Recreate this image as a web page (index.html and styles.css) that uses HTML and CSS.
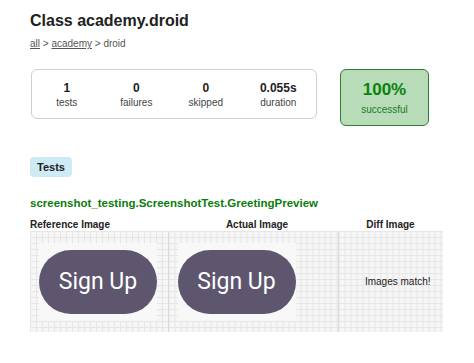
FILE: index.html
```html
<!DOCTYPE html>
<html lang="en">
<head>
  <meta charset="UTF-8" />
  <title>Test results - Class academy.droid</title>
  <link rel="stylesheet" href="styles.css">
</head>
<body>
  <div id="content">
    <h1>Class academy.droid</h1>
    <div class="breadcrumbs">
      <a href="#">all</a> &gt; <a href="#">academy</a> &gt; droid
    </div>

    <div id="summary">
      <div class="infoBox">
        <div class="counter">
          <div class="value">1</div>
          <p>tests</p>
        </div>
        <div class="counter">
          <div class="value">0</div>
          <p>failures</p>
        </div>
        <div class="counter">
          <div class="value">0</div>
          <p>skipped</p>
        </div>
        <div class="counter">
          <div class="value">0.055s</div>
          <p>duration</p>
        </div>
      </div>
      <div class="successRate">
        <div class="percent">100%</div>
        <p>successful</p>
      </div>
    </div>

    <ul class="tabLinks">
      <li class="selected">Tests</li>
    </ul>

    <h3 class="testName">screenshot_testing.ScreenshotTest.GreetingPreview</h3>

    <table class="shots">
      <thead>
        <tr>
          <th class="col-ref">Reference Image</th>
          <th class="col-actual">Actual Image</th>
          <th class="col-diff">Diff Image</th>
        </tr>
      </thead>
      <tbody>
        <tr>
          <td class="col-ref">
            <div class="shot"><div class="btn">Sign Up</div></div>
          </td>
          <td class="col-actual">
            <div class="shot"><div class="btn">Sign Up</div></div>
          </td>
          <td class="col-diff">
            <div class="match">Images match!</div>
          </td>
        </tr>
      </tbody>
    </table>
  </div>
</body>
</html>
```

FILE: styles.css
```css
body {
  margin: 0;
  background: #ffffff;
  font-family: "Liberation Sans", Arial, sans-serif;
  color: #000;
}

#content {
  padding: 10px 30px 0 30px;
}

h1 {
  margin: 0;
  font-size: 16px;
  line-height: 22px;
  font-weight: bold;
  color: #222;
}

.breadcrumbs {
  margin-top: 5px;
  font-size: 10px;
  line-height: 14px;
  color: #555;
}

.breadcrumbs a {
  color: #555;
}

#summary {
  margin-top: 18px;
  display: flex;
  align-items: flex-start;
}

.infoBox {
  width: 286px;
  height: 50px;
  border: 1px solid #cfcfcf;
  border-radius: 6px;
  display: flex;
  box-sizing: border-box;
  margin-left: 1px;
  padding-top: 10px;
}

.counter {
  text-align: center;
}

.counter:nth-child(1) { width: 70px; }
.counter:nth-child(2) { width: 70px; }
.counter:nth-child(3) { width: 70px; }
.counter:nth-child(4) { width: 76px; }

.counter .value {
  font-size: 12px;
  line-height: 16px;
  font-weight: bold;
  color: #222;
}

.counter p {
  margin: 0;
  font-size: 10px;
  line-height: 14px;
  color: #444;
}

.successRate {
  margin-left: 23px;
  width: 89px;
  height: 57px;
  box-sizing: border-box;
  background: #b7dcb7;
  border: 1px solid #2f7d32;
  border-radius: 6px;
  text-align: center;
  padding-top: 9px;
}

.successRate .percent {
  font-size: 17px;
  line-height: 22px;
  font-weight: bold;
  color: #0a820a;
}

.successRate p {
  margin: 2px 0 0;
  font-size: 10px;
  line-height: 14px;
  color: #1f7a1f;
}

.tabLinks {
  list-style: none;
  margin: 31px 0 0;
  padding: 0;
  display: flex;
}

.tabLinks li {
  background: #cdeaf5;
  border-radius: 4px;
  padding: 0 7px;
  height: 20px;
  line-height: 20px;
  font-size: 11px;
  font-weight: bold;
  color: #222;
}

.testName {
  margin: 18px 0 0;
  font-size: 11.5px;
  line-height: 16px;
  font-weight: bold;
  color: #0a7d0a;
}

.shots {
  margin-top: 8px;
  border-collapse: collapse;
  width: 413px;
  table-layout: fixed;
}

.shots th {
  font-size: 10px;
  line-height: 12px;
  font-weight: bold;
  color: #222;
  padding: 0;
  text-align: center;
}

.shots th.col-ref {
  text-align: left;
}

.shots th.col-actual {
  text-indent: 8px;
}

.shots .col-ref { width: 138px; }
.shots .col-actual { width: 170px; }
.shots .col-diff { width: 105px; }

.shots tbody td {
  height: 101px;
  padding: 0;
  vertical-align: middle;
  background-color: #f6f6f6;
  background-image:
    linear-gradient(to right, #e6e6e6 1px, transparent 1px),
    linear-gradient(to bottom, #e6e6e6 1px, transparent 1px);
  background-size: 6px 6px;
}

.shots tbody td.col-ref,
.shots tbody td.col-actual {
  border-right: 1px solid #dadada;
}

.shot {
  width: 118px;
  height: 78px;
  background: #f8f8f8;
  display: flex;
  align-items: center;
}

.col-ref .shot { margin-left: 9px; }
.col-actual .shot { margin-left: 9px; }

.btn {
  width: 118px;
  height: 64px;
  border-radius: 32px;
  background: #5e566f;
  color: #fff;
  font-family: Roboto, "Liberation Sans", sans-serif;
  font-size: 23px;
  display: flex;
  align-items: center;
  justify-content: center;
}

.match {
  font-size: 10px;
  color: #222;
  text-align: center;
  padding-left: 14px;
}
```
